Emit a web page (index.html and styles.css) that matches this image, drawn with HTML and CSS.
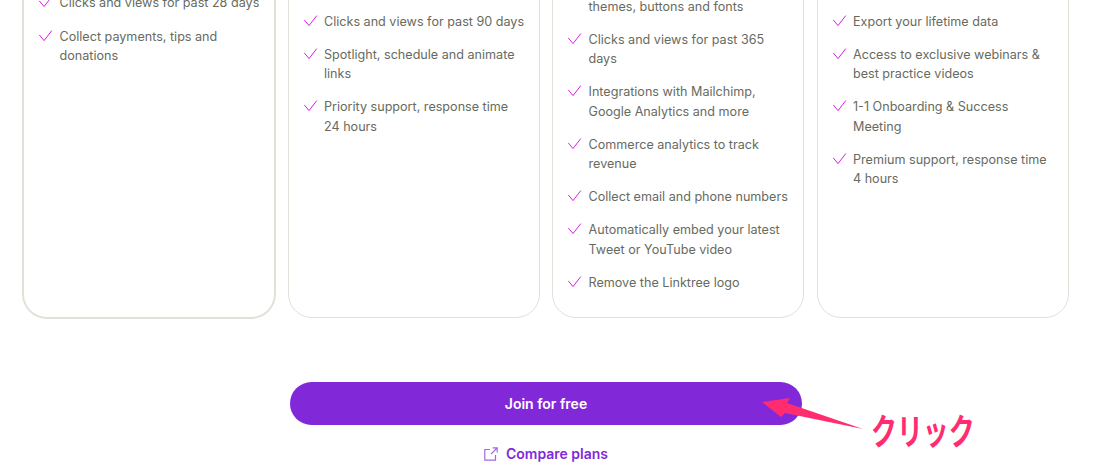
FILE: index.html
```html
<!DOCTYPE html>
<html lang="en">
<head>
<meta charset="utf-8">
<title>Linktree plans</title>
<link rel="stylesheet" href="styles.css">
</head>
<body>
<main class="page">
  <section class="plans">
    <article class="card card-featured">
      <h2 class="plan-head head-free">Free</h2>
      <ul class="features">
        <li><svg class="check" viewBox="0 0 14 14"><path d="M.3 5.9 5 11.6 12.8 1.6"/></svg><span>Unlimited links</span></li>
        <li><svg class="check" viewBox="0 0 14 14"><path d="M.3 5.9 5 11.6 12.8 1.6"/></svg><span>Clicks and views for past 28 days</span></li>
        <li><svg class="check" viewBox="0 0 14 14"><path d="M.3 5.9 5 11.6 12.8 1.6"/></svg><span>Collect payments, tips and donations</span></li>
      </ul>
    </article>
    <article class="card">
      <h2 class="plan-head">Starter</h2>
      <ul class="features">
        <li><svg class="check" viewBox="0 0 14 14"><path d="M.3 5.9 5 11.6 12.8 1.6"/></svg><span>Everything in Free</span></li>
        <li><svg class="check" viewBox="0 0 14 14"><path d="M.3 5.9 5 11.6 12.8 1.6"/></svg><span>Clicks and views for past 90 days</span></li>
        <li><svg class="check" viewBox="0 0 14 14"><path d="M.3 5.9 5 11.6 12.8 1.6"/></svg><span>Spotlight, schedule and animate links</span></li>
        <li><svg class="check" viewBox="0 0 14 14"><path d="M.3 5.9 5 11.6 12.8 1.6"/></svg><span>Priority support, response time 24 hours</span></li>
      </ul>
    </article>
    <article class="card">
      <h2 class="plan-head head-pro">Pro</h2>
      <ul class="features">
        <li><svg class="check" viewBox="0 0 14 14"><path d="M.3 5.9 5 11.6 12.8 1.6"/></svg><span>Customize your Linktree with themes, buttons and fonts</span></li>
        <li><svg class="check" viewBox="0 0 14 14"><path d="M.3 5.9 5 11.6 12.8 1.6"/></svg><span>Clicks and views for past 365 days</span></li>
        <li><svg class="check" viewBox="0 0 14 14"><path d="M.3 5.9 5 11.6 12.8 1.6"/></svg><span>Integrations with Mailchimp, Google Analytics and more</span></li>
        <li><svg class="check" viewBox="0 0 14 14"><path d="M.3 5.9 5 11.6 12.8 1.6"/></svg><span>Commerce analytics to track revenue</span></li>
        <li><svg class="check" viewBox="0 0 14 14"><path d="M.3 5.9 5 11.6 12.8 1.6"/></svg><span>Collect email and phone numbers</span></li>
        <li><svg class="check" viewBox="0 0 14 14"><path d="M.3 5.9 5 11.6 12.8 1.6"/></svg><span>Automatically embed your latest Tweet or YouTube video</span></li>
        <li><svg class="check" viewBox="0 0 14 14"><path d="M.3 5.9 5 11.6 12.8 1.6"/></svg><span>Remove the Linktree logo</span></li>
      </ul>
    </article>
    <article class="card">
      <h2 class="plan-head">Premium</h2>
      <ul class="features">
        <li><svg class="check" viewBox="0 0 14 14"><path d="M.3 5.9 5 11.6 12.8 1.6"/></svg><span>Everything in Pro</span></li>
        <li><svg class="check" viewBox="0 0 14 14"><path d="M.3 5.9 5 11.6 12.8 1.6"/></svg><span>Export your lifetime data</span></li>
        <li><svg class="check" viewBox="0 0 14 14"><path d="M.3 5.9 5 11.6 12.8 1.6"/></svg><span>Access to exclusive webinars &amp; best practice videos</span></li>
        <li><svg class="check" viewBox="0 0 14 14"><path d="M.3 5.9 5 11.6 12.8 1.6"/></svg><span>1-1 Onboarding &amp; Success Meeting</span></li>
        <li><svg class="check" viewBox="0 0 14 14"><path d="M.3 5.9 5 11.6 12.8 1.6"/></svg><span>Premium support, response time 4 hours</span></li>
      </ul>
    </article>
  </section>
  <section class="actions">
    <a class="join" href="#">Join for free</a>
    <a class="compare" href="#">
      <svg class="ext" viewBox="0 0 14 14"><path d="M6 2.5H.8v10.7h10.7V8M7 7.2 13 1M8.6 .8H13.2V5.4"/></svg>
      <span>Compare plans</span>
    </a>
  </section>
  <svg class="arrow" viewBox="0 0 102 38"><path d="M0 10 28 6 25 11 101 37 23 21 19 25Z"/></svg>
  <div class="note">クリック</div>
</main>
</body>
</html>
```

FILE: styles.css
```css
* { box-sizing: border-box; }
html, body { margin: 0; padding: 0; background: #fff; }
body { height: 473px; overflow: hidden; font-family: Inter, "Noto Sans", sans-serif; color: #676b5f; }
.page { position: relative; width: 1097px; height: 473px; overflow: hidden; }
.plans {
  display: grid;
  grid-template-columns: repeat(4, 252px);
  gap: 12.5px;
  margin-top: -100px;
  padding: 0 0 0 23px;
}
.card {
  border: 1px solid #e0e2d9;
  border-radius: 24px;
  padding: 0 13px 25px 15px;
  background: #fff;
}
.card-featured { box-shadow: 0 0 0 1px #e0e2d9; }
.plan-head { margin: 0; height: 77.6px; padding-top: 16px; font-size: 20px; line-height: 24px; font-weight: 700; color: #1e2330; }
.head-free { height: 59.2px; }
.head-pro { height: 76.6px; }
.features { list-style: none; margin: 0; padding: 0; display: flex; flex-direction: column; gap: 14px; }
.features li { display: flex; gap: 6.5px; font-size: 12.6px; line-height: 19.2px; }
.check { flex: none; width: 14px; height: 14px; margin-top: 2px; fill: none; stroke: #d91ce8; stroke-width: 1; }
.actions { display: flex; flex-direction: column; align-items: center; margin-top: 64px; padding-right: 5px; }
.join {
  width: 512px; height: 43px; border-radius: 22px;
  display: flex; align-items: center; justify-content: center;
  background: #8129d9; color: #fff; font-size: 14px; font-weight: 600; text-decoration: none;
}
.compare {
  display: flex; align-items: center; gap: 8px; margin-top: 18.5px;
  color: #8129d9; font-size: 14px; line-height: 20px; font-weight: 600; text-decoration: none;
}
.ext { width: 14px; height: 14px; fill: none; stroke: #a268e4; stroke-width: 1.2; }
.arrow { position: absolute; left: 762px; top: 392px; width: 102px; height: 38px; overflow: visible; fill: #ff2d6f; }
.note {
  position: absolute; left: 871px; top: 404px; width: 106px;
  font-family: "Noto Sans CJK JP", sans-serif; font-size: 36px; font-weight: 700; line-height: 50px; color: #ff2d6f;
  white-space: nowrap; transform: scaleX(0.72); transform-origin: left center;
}
```
